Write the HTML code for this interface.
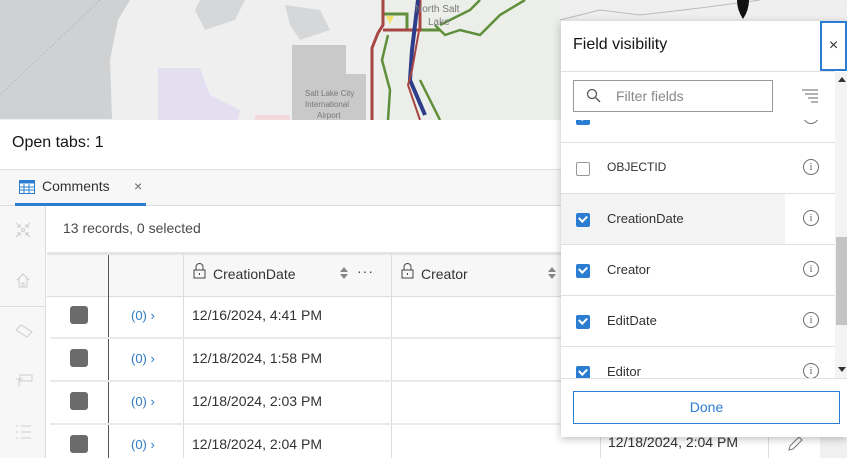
<!DOCTYPE html>
<html><head><style>
*{margin:0;padding:0;box-sizing:border-box}
body{width:847px;height:458px;overflow:hidden;position:relative;font-family:"Liberation Sans",sans-serif;background:#fff;color:#323232}
.a{position:absolute}
.cb{position:absolute;left:15px;width:14px;height:14px;border-radius:2px;background:#2a7dd1}
.cb:after{content:"";position:absolute;left:3px;top:2px;width:6px;height:4px;border-left:2px solid #fff;border-bottom:2px solid #fff;transform:rotate(-45deg)}
.row{position:absolute;left:0;width:274px;height:51px;border-bottom:1px solid #e0e0e0}
.row .t{position:absolute;left:46px;top:17px;font-size:13px;color:#323232}
.info{position:absolute;left:242px;top:16px;width:16px;height:16px;border:1.3px solid #6a6a6a;border-radius:50%;font-size:11px;text-align:center;line-height:14px;color:#6a6a6a;font-family:"Liberation Serif",serif}
.tr{position:absolute;left:50px;width:560px;height:43px;border-bottom:2px solid #eaeaea}
.sq{position:absolute;left:20px;top:10px;width:18px;height:18px;border-radius:3px;background:#6b6b6b}
.lk{position:absolute;left:81px;top:12px;font-size:13px;color:#2f7ac4}
.dt{position:absolute;left:142px;top:11px;font-size:14px;color:#323232}
</style></head><body>
<svg class="a" style="left:0;top:0" width="847" height="120">
<rect width="847" height="120" fill="#efefef"/>
<path d="M0 0H130L118 20 110 60 112 119H0Z" fill="#cfd1d2"/>
<path d="M0 95L100 0" stroke="#bbb" stroke-dasharray="2 2"/>
<path d="M200 0H245L235 20 205 30 195 10Z" fill="#d5d7d8"/>
<path d="M285 5 320 10 330 30 300 40 290 25Z" fill="#d5d7d8"/>
<path d="M158 68H200L210 95 240 110 238 120H158Z" fill="#e3dff0"/>
<path d="M292 45H346V74H366V120H292Z" fill="#c9c9c9"/>
<path d="M255 115H290V120H255Z" fill="#f1d9dc"/>
<path d="M380 0H560V120H380Z" fill="#eceeea"/>
<path d="M383 14H407V30H440" stroke="#5f8f3a" stroke-width="3" fill="none"/>
<path d="M383 0V25L378 33 372 48V120" stroke="#a64543" stroke-width="3" fill="none"/>
<path d="M383 30H420V0" stroke="#a64543" stroke-width="3" fill="none"/>
<path d="M418 0 412 50 410 80 425 115" stroke="#2e3d8a" stroke-width="4" fill="none"/>
<path d="M420 25 412 70 408 85 420 120" stroke="#a64543" stroke-width="2" fill="none"/>
<path d="M388 35 382 60 390 90 388 120M440 25 470 10 480 0M435 25 445 35 460 30 480 35 500 15 525 0M420 80 440 120" stroke="#5f8f3a" stroke-width="2.5" fill="none"/>
<path d="M386 16H394L390 24Z" fill="#f2e46a"/>
<text x="415" y="12" font-size="10" fill="#777" font-family="Liberation Sans">North Salt</text>
<text x="428" y="25" font-size="10" fill="#777" font-family="Liberation Sans">Lake</text>
<text x="305" y="96" font-size="8" fill="#777" font-family="Liberation Sans">Salt Lake City</text>
<text x="305" y="107" font-size="8" fill="#777" font-family="Liberation Sans">International</text>
<text x="317" y="118" font-size="8" fill="#777" font-family="Liberation Sans">Airport</text>
<path d="M560 20 600 10 640 15 700 8 760 0" stroke="#bbb" fill="none"/>
<path d="M737 0Q737 10 743 19 749 10 749 0Z" fill="#111"/>
</svg>
<div class="a" style="left:12px;top:134px;font-size:16px;color:#151515">Open tabs: 1</div>
<div class="a" style="left:0;top:169px;width:847px;height:37px;background:#f7f7f7;border-top:1px solid #ddd;border-bottom:1px solid #ddd"></div>
<svg class="a" style="left:19px;top:180px" width="16" height="14"><rect x=".5" y=".5" width="15" height="13" fill="#fff" stroke="#2a7dd1"/><rect x=".5" y=".5" width="15" height="3" fill="#2a7dd1"/><path d="M1 7H15M1 10H15M5 4V14M10 4V14" stroke="#2a7dd1"/></svg>
<div class="a" style="left:42px;top:178px;font-size:14px;color:#323232">Comments</div>
<div class="a" style="left:134px;top:178px;font-size:14px;color:#666">×</div>
<div class="a" style="left:15px;top:203px;width:131px;height:3px;background:#2a7dd1"></div>
<div class="a" style="left:0;top:206px;width:46px;height:252px;background:#f7f7f7;border-right:1px solid #ddd"></div>
<div class="a" style="left:0;top:306px;width:46px;height:1px;background:#ddd"></div>
<svg class="a" style="left:14px;top:221px" width="18" height="18" stroke="#ccc" fill="none"><path d="M2 2 6 6M6 3V6H3M16 2 12 6M12 3V6H15M2 16 6 12M3 12H6V15M16 16 12 12M15 12H12V15"/><circle cx="9" cy="9" r="1.5"/></svg>
<svg class="a" style="left:15px;top:272px" width="16" height="16" stroke="#ccc" fill="none"><path d="M2 8 8 2 14 8M4 6V15H12V6M7 15V11H9V15"/></svg>
<svg class="a" style="left:15px;top:324px" width="18" height="14" stroke="#ccc" fill="none"><path d="M1 6 6 1 17 8 12 13Z"/></svg>
<svg class="a" style="left:15px;top:373px" width="18" height="16" stroke="#ccc" fill="none"><rect x="5" y="2" width="12" height="6"/><path d="M1 6H8M4 6V14"/></svg>
<svg class="a" style="left:15px;top:424px" width="18" height="16" stroke="#ccc" fill="none"><path d="M1 2H3M6 2H16M1 8H3M6 8H16M1 14H3M6 14H16"/></svg>
<div class="a" style="left:63px;top:220px;font-size:14px;color:#4a4a4a">13 records, 0 selected</div>
<div class="a" style="left:47px;top:252px;width:560px;height:3px;background:#e4e4e4"></div>
<div class="a" style="left:47px;top:255px;width:560px;height:42px;background:#f7f7f7;border-bottom:1px solid #ddd"></div>
<div class="a" style="left:108px;top:255px;width:1px;height:203px;background:#555"></div>
<div class="a" style="left:183px;top:255px;width:1px;height:203px;background:#ddd"></div>
<div class="a" style="left:391px;top:255px;width:1px;height:203px;background:#ddd"></div>
<svg class="a" style="left:193px;top:263px" width="13" height="16" stroke="#444" fill="none"><path d="M3 7V4A3.5 3.5 0 0 1 10 4V7"/><rect x="1" y="7" width="11" height="8"/><path d="M6.5 10V12"/></svg>
<div class="a" style="left:213px;top:266px;font-size:14px;color:#323232">CreationDate</div>
<svg class="a" style="left:340px;top:267px" width="8" height="12" fill="#888"><path d="M0 5 4 0 8 5ZM0 7 4 12 8 7Z"/></svg>
<div class="a" style="left:357px;top:263px;font-size:14px;color:#444;letter-spacing:1px">···</div>
<svg class="a" style="left:401px;top:263px" width="13" height="16" stroke="#444" fill="none"><path d="M3 7V4A3.5 3.5 0 0 1 10 4V7"/><rect x="1" y="7" width="11" height="8"/><path d="M6.5 10V12"/></svg>
<div class="a" style="left:421px;top:266px;font-size:14px;color:#323232">Creator</div>
<svg class="a" style="left:548px;top:267px" width="8" height="12" fill="#888"><path d="M0 5 4 0 8 5ZM0 7 4 12 8 7Z"/></svg>
<div class="tr" style="top:296px"><div class="sq"></div><div class="lk">(0) ›</div><div class="dt">12/16/2024, 4:41 PM</div></div>
<div class="tr" style="top:339px"><div class="sq"></div><div class="lk">(0) ›</div><div class="dt">12/18/2024, 1:58 PM</div></div>
<div class="tr" style="top:382px"><div class="sq"></div><div class="lk">(0) ›</div><div class="dt">12/18/2024, 2:03 PM</div></div>
<div class="tr" style="top:425px;border:0"><div class="sq"></div><div class="lk">(0) ›</div><div class="dt">12/18/2024, 2:04 PM</div></div>
<div class="a" style="left:600px;top:436px;width:1px;height:22px;background:#ddd"></div>
<div class="a" style="left:608px;top:434px;font-size:14px;color:#323232">12/18/2024, 2:04 PM</div>
<div class="a" style="left:768px;top:436px;width:1px;height:22px;background:#ddd"></div>
<svg class="a" style="left:787px;top:436px" width="16" height="16" stroke="#777" fill="none"><path d="M2 14 3 10 12 1 15 4 6 13Z"/></svg>
<div class="a" style="left:820px;top:436px;width:27px;height:22px;background:#f0f0f0"></div>
<div class="a" style="left:561px;top:21px;width:286px;height:416px;background:#fff;box-shadow:0 2px 8px rgba(0,0,0,.25)">
 <div class="a" style="left:12px;top:15px;font-size:16px;color:#151515">Field visibility</div>
 <div class="row" style="top:71px;height:51px"><div class="cb" style="top:19px"></div><div class="info">i</div></div>
 <div class="row" style="top:122px"><div class="cb" style="top:19px;background:#fff;border:1px solid #999"></div><div class="t" style="font-size:12px">OBJECTID</div><div class="info">i</div></div>
 <div class="row" style="top:173px"><div class="a" style="left:0;top:0;width:224px;height:50px;background:#f3f3f3"></div><div class="cb" style="top:19px"></div><div class="t">CreationDate</div><div class="info">i</div></div>
 <div class="row" style="top:224px"><div class="cb" style="top:19px"></div><div class="t">Creator</div><div class="info">i</div></div>
 <div class="row" style="top:275px"><div class="cb" style="top:19px"></div><div class="t">EditDate</div><div class="info">i</div></div>
 <div class="row" style="top:326px;height:31px;overflow:hidden;border:0"><div class="cb" style="top:19px"></div><div class="t">Editor</div><div class="info">i</div></div>
 <div class="a" style="left:0;top:51px;width:274px;height:48px;background:#fff"></div>
 <div class="a" style="left:259px;top:0;width:27px;height:50px;border:2px solid #2a7dd1;font-size:16px;text-align:center;line-height:46px;color:#333;background:#fff">×</div>
 <div class="a" style="left:0;top:50px;width:274px;height:1px;background:#e0e0e0"></div>
 <div class="a" style="left:12px;top:59px;width:200px;height:32px;border:1px solid #999;background:#fff"></div>
 <svg class="a" style="left:25px;top:67px" width="15" height="15"><circle cx="6" cy="6" r="4.5" stroke="#555" stroke-width="1.3" fill="none"/><path d="M9.5 9.5 14 14" stroke="#555" stroke-width="1.3"/></svg>
 <div class="a" style="left:55px;top:67px;font-size:14px;color:#888">Filter fields</div>
 <svg class="a" style="left:241px;top:68px" width="16" height="16"><path d="M0 1H16M3 5H16M6 9H16M9 13H16" stroke="#666"/></svg>
 <div class="a" style="left:274px;top:51px;width:12px;height:306px;background:#f3f3f3"></div>
 <div class="a" style="left:275px;top:216px;width:11px;height:88px;background:#c4c4c4"></div>
 <svg class="a" style="left:277px;top:56px" width="8" height="6"><path d="M0 5 4 0 8 5Z" fill="#333"/></svg>
 <svg class="a" style="left:277px;top:346px" width="8" height="6"><path d="M0 0 4 5 8 0Z" fill="#333"/></svg>
 <div class="a" style="left:0;top:357px;width:286px;height:1px;background:#e0e0e0"></div>
 <div class="a" style="left:12px;top:370px;width:267px;height:33px;border:1px solid #2a7dd1;text-align:center;line-height:31px;font-size:14px;color:#2a7dd1">Done</div>
</div>
</body></html>
